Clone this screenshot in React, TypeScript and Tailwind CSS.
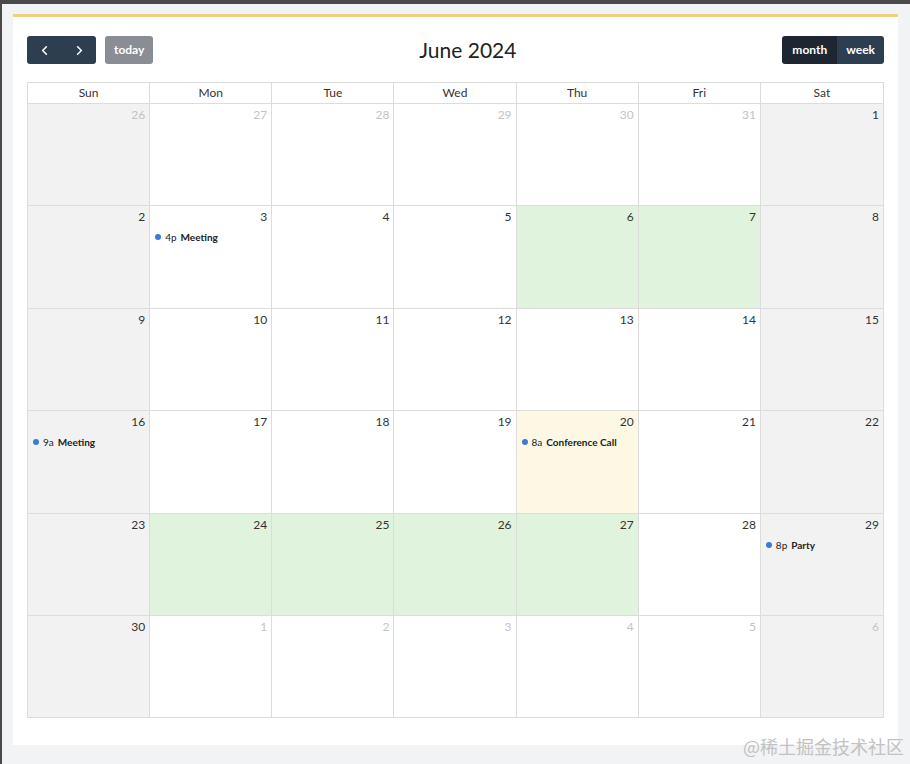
import { ChevronLeft, ChevronRight } from "lucide-react";

type Ev = { time: string; title: string };

type Day = {
  n: number;
  other?: boolean;
  bg?: string;
  ev?: Ev;
};

const font = { fontFamily: "Lato, 'Noto Sans', sans-serif" };

const weeks: Day[][] = [
  [{ n: 26, other: true }, { n: 27, other: true }, { n: 28, other: true }, { n: 29, other: true }, { n: 30, other: true }, { n: 31, other: true }, { n: 1 }],
  [{ n: 2 }, { n: 3, ev: { time: "4p", title: "Meeting" } }, { n: 4 }, { n: 5 }, { n: 6, bg: "green" }, { n: 7, bg: "green" }, { n: 8 }],
  [{ n: 9 }, { n: 10 }, { n: 11 }, { n: 12 }, { n: 13 }, { n: 14 }, { n: 15 }],
  [{ n: 16, ev: { time: "9a", title: "Meeting" } }, { n: 17 }, { n: 18 }, { n: 19 }, { n: 20, bg: "today", ev: { time: "8a", title: "Conference Call" } }, { n: 21 }, { n: 22 }],
  [{ n: 23 }, { n: 24, bg: "green" }, { n: 25, bg: "green" }, { n: 26, bg: "green" }, { n: 27, bg: "green" }, { n: 28 }, { n: 29, ev: { time: "8p", title: "Party" } }],
  [{ n: 30 }, { n: 1, other: true }, { n: 2, other: true }, { n: 3, other: true }, { n: 4, other: true }, { n: 5, other: true }, { n: 6, other: true }],
];

const dayNames = ["Sun", "Mon", "Tue", "Wed", "Thu", "Fri", "Sat"];

function cellBg(d: Day, col: number) {
  if (d.bg === "green") return "bg-[#e0f3dc]";
  if (d.bg === "today") return "bg-[#fdf8e4]";
  if (col === 0 || col === 6) return "bg-[#f2f2f2]";
  return "bg-white";
}

export default function App() {
  return (
    <div
      className="relative w-[910px] h-[764px] overflow-hidden bg-[#f2f3f5] border-t-4 border-l-2 border-[#4a4a4a]"
      style={font}
    >
      {/* Card */}
      <div className="ml-[11px] mt-[10px] w-[885px] h-[731px] bg-white border-t-[3px] border-[#f0cf7e] px-[14px] pt-[19px]">
        {/* Toolbar */}
        <div className="flex items-center justify-between h-[28px]">
          <div className="flex items-center gap-[9px]">
            <div className="flex h-[28px] rounded-[3px] bg-[#2c3e50] text-white">
              <button className="w-[35px] flex items-center justify-center">
                <ChevronLeft size={15} strokeWidth={2.5} />
              </button>
              <button className="w-[34px] flex items-center justify-center">
                <ChevronRight size={15} strokeWidth={2.5} />
              </button>
            </div>
            <button className="h-[28px] px-[9px] rounded-[3px] bg-[#8a8d93] text-white text-[12px] font-bold">
              today
            </button>
          </div>
          <h2 className="text-[21px] text-[#222] leading-none -mt-[2px]">June 2024</h2>
          <div className="flex h-[28px] rounded-[3px] overflow-hidden text-white text-[12px] font-bold">
            <button className="px-[10px] bg-[#1e2631]">month</button>
            <button className="px-[9px] bg-[#2c3e50]">week</button>
          </div>
        </div>

        {/* Grid */}
        <div className="mt-[18px] border border-[#dcdcdc]">
          <div className="grid grid-cols-7 h-[20px]">
            {dayNames.map((d, i) => (
              <div
                key={d}
                className={`flex items-center justify-center text-[12px] text-[#333] ${i < 6 ? "border-r border-[#dcdcdc]" : ""}`}
              >
                {d}
              </div>
            ))}
          </div>
          {weeks.map((w, wi) => (
            <div key={wi} className="grid grid-cols-7 h-[102.4px] border-t border-[#dcdcdc]">
              {w.map((d, i) => (
                <div
                  key={i}
                  className={`${cellBg(d, i)} ${i < 6 ? "border-r border-[#dcdcdc]" : ""} flex flex-col`}
                >
                  <div
                    className={`text-right pr-[4px] pt-[3px] text-[12px] leading-[16px] ${d.other ? "text-[#c4c4c4]" : "text-[#333]"}`}
                  >
                    {d.n}
                  </div>
                  {d.ev && (
                    <div className="flex items-center gap-[4px] pl-[5px] mt-[6px] text-[10px] leading-[12px] text-[#222]">
                      <span className="w-[6px] h-[6px] rounded-full bg-[#3a7bd5]" />
                      <span>{d.ev.time}</span>
                      <span className="font-bold">{d.ev.title}</span>
                    </div>
                  )}
                </div>
              ))}
            </div>
          ))}
        </div>
      </div>

      {/* Watermark */}
      <div
        className="absolute right-[6px] bottom-[4px] text-[18px] text-[#c2c2c2]"
        style={{ fontFamily: "'Noto Sans CJK SC', sans-serif" }}
      >
        @稀土掘金技术社区
      </div>
    </div>
  );
}
